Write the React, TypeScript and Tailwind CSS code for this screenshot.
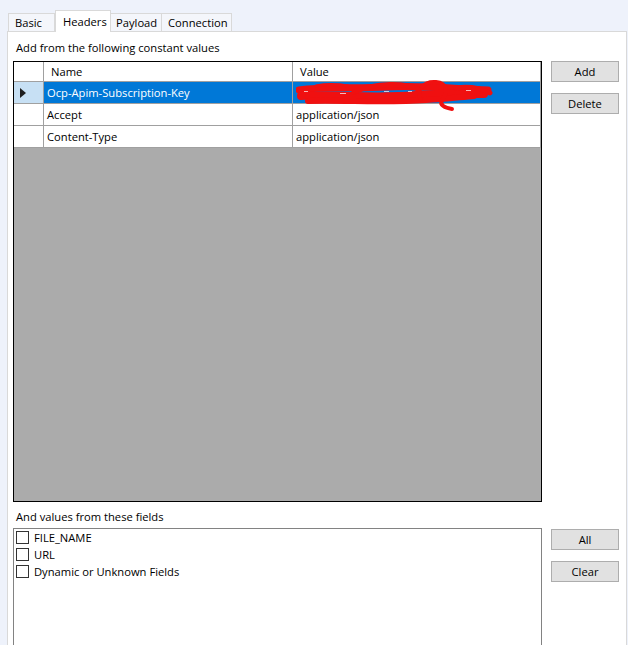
import React from "react";

const font = { fontFamily: '"Open Sans", "Noto Sans", "Liberation Sans", sans-serif' };

function Btn({ label }: { label: string }) {
  return (
    <div className="flex h-[21px] w-[68px] items-center justify-center border border-[#adadad] bg-[#e1e1e1] leading-[15px] text-black">
      {label}
    </div>
  );
}

function Scribble() {
  return (
    <svg
      className="pointer-events-none absolute left-[282px] top-[16px]"
      width="200"
      height="34"
      viewBox="0 0 200 34"
    >
      <g fill="none" stroke="#f01010" strokeLinecap="round" strokeLinejoin="round">
        <path d="M3 12 C30 8 60 11 90 9 C120 7 150 10 192 12" strokeWidth="7" />
        <path d="M5 18 C40 16 80 21 120 17 C150 15 170 16 188 16" strokeWidth="8" />
        <path d="M12 23 C50 22 90 25 130 22 C150 21 165 19 178 18" strokeWidth="6" />
        <path d="M125 22 C119 12 128 3 140 4 C151 5 153 14 146 22 C143 27 149 30 156 31" strokeWidth="4" />
        <path d="M58 14 C80 4 110 5 122 11" strokeWidth="5" />
        <path d="M160 10 C175 8 186 11 194 15" strokeWidth="5" />
        <path d="M20 8 C30 6 40 6 52 8" strokeWidth="3" />
      </g>
      <g fill="#ffffff" opacity="0.7">
        <rect x="8" y="13" width="4" height="1" />
        <rect x="44" y="15" width="6" height="1" />
        <rect x="88" y="13" width="5" height="1" />
        <rect x="112" y="13" width="4" height="1" />
        <rect x="170" y="12" width="5" height="1" />
      </g>
    </svg>
  );
}

export default function App() {
  const rows = [
    { name: "Ocp-Apim-Subscription-Key", value: "", sel: true },
    { name: "Accept", value: "application/json", sel: false },
    { name: "Content-Type", value: "application/json", sel: false },
  ];
  const fields = ["FILE_NAME", "URL", "Dynamic or Unknown Fields"];

  return (
    <div
      className="h-[645px] w-[628px] overflow-hidden bg-[#eef2fb] pl-[7px] pt-[10px] text-[11.2px] text-black"
      style={font}
    >
      {/* tabs */}
      <div className="flex h-[21px] items-end">
        <div className="ml-[1px] flex h-[18px] w-[47px] items-center border border-b-0 border-[#d9d9d9] bg-[#f4f6fb] pl-[6px] leading-[15px]">
          Basic
        </div>
        <div className="relative z-10 -mb-px flex h-[22px] w-[56px] items-start border border-b-0 border-[#d9d9d9] bg-white pl-[7px] pt-[3px] leading-[15px]">
          Headers
        </div>
        <div className="flex h-[18px] w-[51px] items-center border border-b-0 border-l-0 border-[#d9d9d9] bg-[#f4f6fb] pl-[5px] leading-[15px]">
          Payload
        </div>
        <div className="flex h-[18px] w-[70px] items-center border border-b-0 border-l-0 border-[#d9d9d9] bg-[#f4f6fb] pl-[6px] leading-[15px]">
          Connection
        </div>
      </div>

      {/* panel */}
      <div className="h-[640px] w-[620px] border border-[#d9d9d9] bg-white pl-[5px]">
        <div className="h-[29px] pl-[3px] pt-[8px] leading-[15px]">Add from the following constant values</div>
        <div className="flex items-start">
          {/* grid */}
          <div className="relative flex h-[441px] w-[529px] flex-col border border-black bg-[#ababab]">
            <div className="flex h-[20px] border-b border-[#a0a0a0] bg-white">
              <div className="w-[30px] border-r border-[#a0a0a0]" />
              <div className="flex w-[249px] items-center border-r border-[#a0a0a0] pl-[7px] leading-[15px]">Name</div>
              <div className="flex flex-1 items-center border-r border-[#a0a0a0] pl-[7px] leading-[15px]">Value</div>
            </div>
            {rows.map((r) => (
              <div key={r.name} className="flex h-[22px] border-b border-[#a0a0a0]">
                <div
                  className={
                    "flex w-[30px] items-center border-r border-[#a0a0a0] pl-[6px] " +
                    (r.sel ? "bg-[#c7e0f4]" : "bg-white")
                  }
                >
                  {r.sel && (
                    <svg width="6" height="10" viewBox="0 0 6 10">
                      <path d="M0 0 L6 5 L0 10 Z" fill="#1e1e1e" />
                    </svg>
                  )}
                </div>
                <div
                  className={
                    "flex w-[249px] items-center border-r border-[#a0a0a0] pl-[3px] leading-[15px] " +
                    (r.sel ? "bg-[#0078d7] text-white" : "bg-white")
                  }
                >
                  {r.name}
                </div>
                <div
                  className={
                    "flex flex-1 items-center border-r border-[#a0a0a0] pl-[3px] leading-[15px] " +
                    (r.sel ? "bg-[#0078d7] text-white" : "bg-white")
                  }
                >
                  {r.value}
                </div>
              </div>
            ))}
            <Scribble />
          </div>
          {/* buttons */}
          <div className="ml-[9px] flex flex-col gap-[11px]">
            <Btn label="Add" />
            <Btn label="Delete" />
          </div>
        </div>

        <div className="h-[26px] pl-[3px] pt-[7px] leading-[15px]">And values from these fields</div>
        <div className="flex items-start">
          <div className="h-[140px] w-[529px] border border-[#828282] bg-white pl-[2px]">
            {fields.map((f) => (
              <div key={f} className="flex h-[17px] items-center">
                <div className="h-[13px] w-[13px] border border-[#333333] bg-white" />
                <span className="ml-[5px] leading-[15px]">{f}</span>
              </div>
            ))}
          </div>
          <div className="ml-[9px] mt-[1px] flex flex-col gap-[11px]">
            <Btn label="All" />
            <Btn label="Clear" />
          </div>
        </div>
      </div>
    </div>
  );
}
